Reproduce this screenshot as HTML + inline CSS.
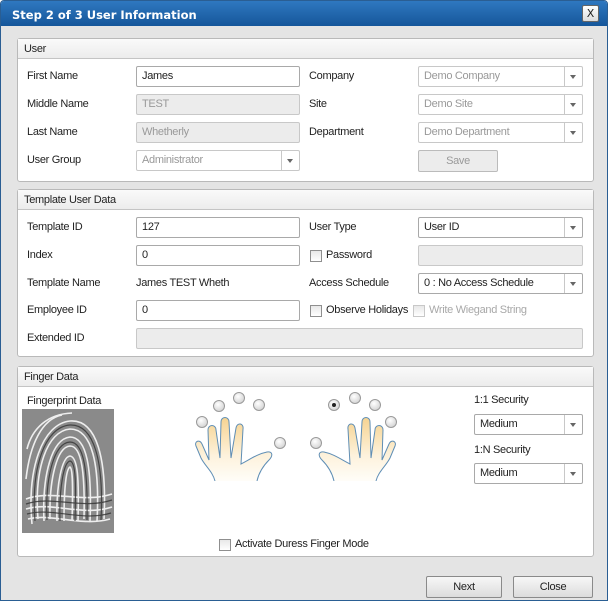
<!DOCTYPE html>
<html><head><style>
*{box-sizing:border-box;margin:0;padding:0}
body{width:608px;height:601px;overflow:hidden;font-family:"Liberation Sans",sans-serif;font-size:11px;letter-spacing:-0.3px;color:#222;background:#fff}
.win{position:absolute;left:0;top:0;width:608px;height:601px;border:1px solid #2a5e93;border-radius:4px 4px 0 0;background:#e4e4e4;overflow:hidden}
.title{position:absolute;left:0;top:0;width:606px;height:25px;background:linear-gradient(#2f78c0,#15569a);color:#fff;font-weight:bold;padding:7px 0 0 11px;font-family:"DejaVu Sans",sans-serif;font-size:11.5px;letter-spacing:0}
.x{position:absolute;right:8px;top:4px;width:17px;height:17px;background:linear-gradient(#fff,#ddd);border:1px solid #666;border-radius:2px;color:#222;font-weight:normal;font-size:11px;text-align:center;line-height:15px}
.grp{position:absolute;left:16px;width:577px;background:#fff;border:1px solid #b9b9b9;border-radius:3px}
.gh{height:20px;background:linear-gradient(#fafafa,#ececec);border-bottom:1px solid #c4c4c4;padding:4px 0 0 6px}
.a{position:absolute;white-space:nowrap}
.in{position:absolute;height:21px;border:1px solid #a9a9a9;border-radius:2px;background:#fff;padding:3px 0 0 5px}
.dis{background:#ececec;color:#999;border-color:#c8c8c8}
.dd{position:absolute;right:0;top:0;width:18px;height:100%;border-left:1px solid #c8c8c8}
.dd:after{content:"";position:absolute;left:5px;top:8px;border:3.5px solid transparent;border-top:4px solid #666}
.btn{position:absolute;height:22px;border:1px solid #8a8a8a;border-radius:2px;background:linear-gradient(#f7f7f7,#dcdcdc);text-align:center;padding-top:4px}
.cb{position:absolute;width:12px;height:12px;border:1px solid #8f8f8f;background:linear-gradient(#e8e8e8,#fff)}
.c{position:absolute;width:12px;height:12px;border-radius:50%;background:radial-gradient(circle at 40% 35%,#fff,#c9c9c9);border:1px solid #9a9a9a}
</style></head><body><div class="win">
<div class="title">Step 2 of 3 User Information<div class="x">X</div></div>

<div class="grp" style="top:37px;height:144px"><div class="gh">User</div></div>
<div class="a" style="left:26px;top:69px">First Name</div>
<div class="a" style="left:26px;top:97px">Middle Name</div>
<div class="a" style="left:26px;top:125px">Last Name</div>
<div class="a" style="left:26px;top:153px">User Group</div>
<div class="in" style="left:135px;top:65px;width:164px">James</div>
<div class="in dis" style="left:135px;top:93px;width:164px">TEST</div>
<div class="in dis" style="left:135px;top:121px;width:164px">Whetherly</div>
<div class="in dis" style="left:135px;top:149px;width:164px;background:#fff">Administrator<div class="dd"></div></div>
<div class="a" style="left:308px;top:69px">Company</div>
<div class="a" style="left:308px;top:97px">Site</div>
<div class="a" style="left:308px;top:125px">Department</div>
<div class="in dis" style="left:417px;top:65px;width:165px;background:#fff">Demo Company<div class="dd"></div></div>
<div class="in dis" style="left:417px;top:93px;width:165px;background:#fff">Demo Site<div class="dd"></div></div>
<div class="in dis" style="left:417px;top:121px;width:165px;background:#fff">Demo Department<div class="dd"></div></div>
<div class="btn" style="left:417px;top:149px;width:80px;color:#999;border-color:#bbb;background:#ececec">Save</div>

<div class="grp" style="top:188px;height:168px"><div class="gh">Template User Data</div></div>
<div class="a" style="left:26px;top:220px">Template ID</div>
<div class="a" style="left:26px;top:248px">Index</div>
<div class="a" style="left:26px;top:276px">Template Name</div>
<div class="a" style="left:26px;top:303px">Employee ID</div>
<div class="a" style="left:26px;top:331px">Extended ID</div>
<div class="in" style="left:135px;top:216px;width:164px">127</div>
<div class="in" style="left:135px;top:244px;width:164px">0</div>
<div class="a" style="left:135px;top:276px">James TEST Wheth</div>
<div class="in" style="left:135px;top:299px;width:164px">0</div>
<div class="in dis" style="left:135px;top:327px;width:447px"></div>
<div class="a" style="left:308px;top:220px">User Type</div>
<div class="cb" style="left:309px;top:249px"></div><div class="a" style="left:325px;top:248px">Password</div>
<div class="a" style="left:308px;top:276px">Access Schedule</div>
<div class="cb" style="left:309px;top:304px"></div><div class="a" style="left:325px;top:303px">Observe Holidays</div>
<div class="cb" style="left:412px;top:304px;border-color:#c8c8c8"></div><div class="a" style="left:428px;top:303px;color:#a8a8a8">Write Wiegand String</div>
<div class="in" style="left:417px;top:216px;width:165px">User ID<div class="dd"></div></div>
<div class="in dis" style="left:417px;top:244px;width:165px"></div>
<div class="in" style="left:417px;top:272px;width:165px">0 : No Access Schedule<div class="dd"></div></div>

<div class="grp" style="top:365px;height:191px"><div class="gh">Finger Data</div></div>
<div class="a" style="left:26px;top:394px">Fingerprint Data</div>
<svg class="a" style="left:21px;top:408px" width="92" height="124"><rect width="92" height="124" fill="#8a8a8a"/>
<g fill="none" stroke="#eee" stroke-width="1.6">
<path d="M10 115 C5 60 20 15 48 12 C75 10 85 50 82 110"/><path d="M16 110 C12 60 25 22 48 20 C70 20 78 55 75 112"/><path d="M22 112 C20 65 30 30 48 28 C65 28 70 60 68 112"/><path d="M28 110 C27 70 35 38 48 37 C60 37 63 65 62 110"/><path d="M35 112 C34 75 40 48 48 47 C56 48 57 70 56 112"/><path d="M42 112 C42 80 44 60 48 58 C51 60 51 80 50 112"/><path d="M4 90 C30 80 60 95 90 85"/><path d="M4 100 C30 92 60 108 90 98"/><path d="M6 110 C30 104 60 118 88 110"/><path d="M5 40 C10 20 25 5 50 4"/><path d="M4 70 C8 35 20 10 40 6"/></g>
<g fill="none" stroke="#333" stroke-width="1.2" opacity=".8"><path d="M13 112 C9 60 22 18 48 16 C72 15 82 52 79 111"/><path d="M25 111 C23 68 32 34 48 33 C62 33 66 62 65 111"/><path d="M38 112 C37 78 42 53 48 52 C54 53 54 75 53 112"/><path d="M4 95 C30 86 60 101 90 91"/><path d="M5 105 C30 98 60 113 89 104"/></g></svg>

<svg class="a" style="left:190px;top:405px" width="220" height="75">
<defs><linearGradient id="h" x1="0" y1="0" x2="0" y2="1"><stop offset="0" stop-color="#f6d391"/><stop offset="0.6" stop-color="#fdf2dc"/><stop offset="1" stop-color="#fffdf8"/></linearGradient></defs>
<g fill="url(#h)" stroke="#5f8eb5" stroke-width="1">
<path d="M24 75 C22 66 14 60 10 52 L5 40 C3 35 9 33 11 38 L18 54 L17 24 C17 18 25 18 25 24 L29 52 L30 16 C30 10 38 10 38 16 L40 52 L45 22 C46 16 53 17 52 23 L50 58 C58 54 66 48 76 46 C82 45 82 50 78 54 C72 60 68 66 66 75"/>
</g>
<g transform="translate(209 0) scale(-1 1)" fill="url(#h)" stroke="#5f8eb5" stroke-width="1">
<path d="M24 75 C22 66 14 60 10 52 L5 40 C3 35 9 33 11 38 L18 54 L17 24 C17 18 25 18 25 24 L29 52 L30 16 C30 10 38 10 38 16 L40 52 L45 22 C46 16 53 17 52 23 L50 58 C58 54 66 48 76 46 C82 45 82 50 78 54 C72 60 68 66 66 75"/>
</g></svg>
<div class="c" style="left:195px;top:415px"></div><div class="c" style="left:212px;top:399px"></div><div class="c" style="left:232px;top:391px"></div><div class="c" style="left:252px;top:398px"></div><div class="c" style="left:273px;top:436px"></div>
<div class="c" style="left:327px;top:398px"><div style="position:absolute;left:3px;top:3px;width:4px;height:4px;border-radius:50%;background:#222"></div></div><div class="c" style="left:348px;top:391px"></div><div class="c" style="left:368px;top:398px"></div><div class="c" style="left:384px;top:415px"></div><div class="c" style="left:309px;top:436px"></div>
<div class="cb" style="left:218px;top:538px"></div><div class="a" style="left:234px;top:537px">Activate Duress Finger Mode</div>
<div class="a" style="left:473px;top:393px">1:1 Security</div>
<div class="in" style="left:473px;top:413px;width:109px">Medium<div class="dd"></div></div>
<div class="a" style="left:473px;top:443px">1:N Security</div>
<div class="in" style="left:473px;top:462px;width:109px">Medium<div class="dd"></div></div>

<div class="btn" style="left:425px;top:575px;width:76px">Next</div>
<div class="btn" style="left:512px;top:575px;width:80px">Close</div>
</div></body></html>
